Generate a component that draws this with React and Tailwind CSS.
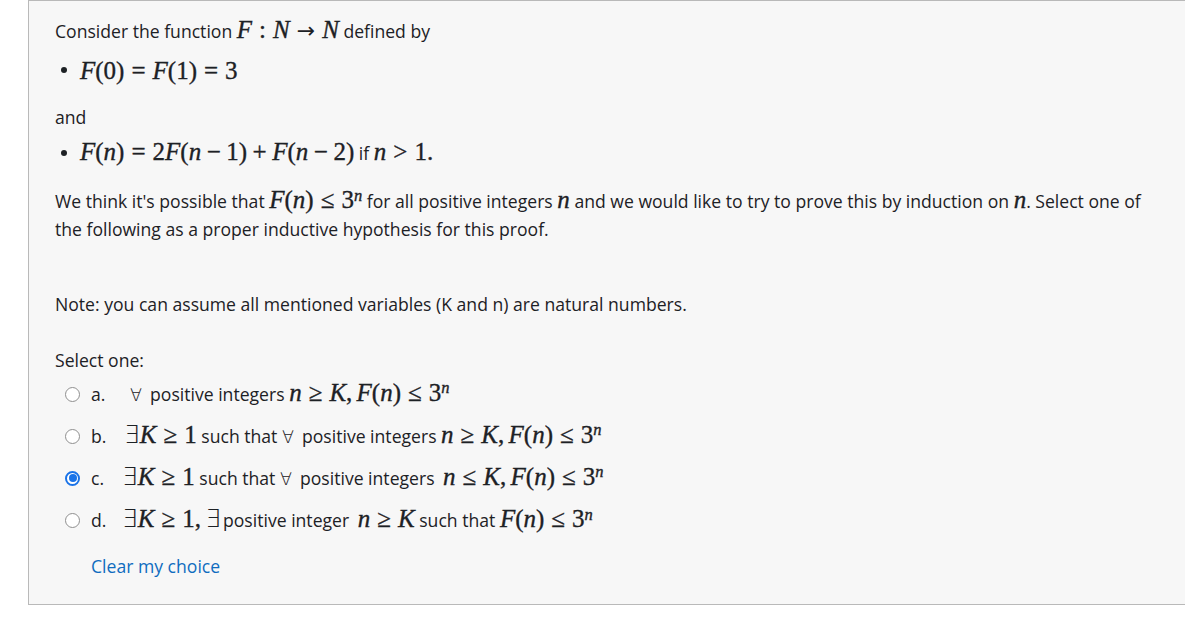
import React from "react";

const I = ({ children }) => <span className="italic">{children}</span>;
const Rel = ({ children }) => <span className="mx-[0.28em]">{children}</span>;
const Bin = ({ children }) => <span className="mx-[0.22em]">{children}</span>;
const Q = ({ children }) => (
  <span className="font-['DejaVu_Sans',sans-serif] font-extralight [-webkit-text-stroke:0px]">{children}</span>
);
const M = ({ children }) => (
  <span className="font-['Liberation_Serif','DejaVu_Serif',serif] text-[25px] leading-none whitespace-nowrap [-webkit-text-stroke:0.35px]">
    {children}
  </span>
);
const Pow = () => (
  <span>
    3<span className="relative -top-[0.45em] text-[0.66em] italic">n</span>
  </span>
);
const Fn = () => (
  <span>
    <I>F</I>(<I>n</I>)
  </span>
);

function Radio({ checked }) {
  return checked ? (
    <span className="w-[15px] h-[15px] rounded-full border-[2px] border-[#1a73e8] flex items-center justify-center bg-white">
      <span className="block w-[8px] h-[8px] rounded-full bg-[#1a73e8]" />
    </span>
  ) : (
    <span className="block w-[15px] h-[15px] rounded-full border border-[#8f8f8f] bg-white" />
  );
}

function Option({ letter, checked, children, gap = "" }) {
  return (
    <div className="h-[42px] flex items-center whitespace-nowrap">
      <span className="ml-[10px] shrink-0">
        <Radio checked={checked} />
      </span>
      <span className="ml-[11px] w-[31px] shrink-0">{letter}.</span>
      <span className={gap}>{children}</span>
    </div>
  );
}

export default function App() {
  return (
    <div className="w-[1185px] h-[622px] bg-white font-['Open_Sans','Noto_Sans',sans-serif] text-[#1d2125] text-[17.6px]">
      <div className="ml-[28px] h-[605px] border-l border-t border-b border-[#b9b9b9] bg-[#f7f7f7] pl-[26px] pt-[16px]">
        <div className="h-[28px] leading-[28px]">
          Consider the function{" "}
          <M>
            <I>F</I>
            <Rel>:</Rel>
            <I>N</I>
            <Rel>
              <span className="font-['DejaVu_Sans',sans-serif] text-[22px] [-webkit-text-stroke:0px]">→</span>
            </Rel>
            <I>N</I>
          </M>{" "}
          defined by
        </div>
        <div className="mt-[11px] h-[28px] flex items-center">
          <span className="block w-[6px] h-[6px] rounded-full bg-[#1d2125] ml-[6px] mr-[13px]" />
          <M>
            <I>F</I>(0)<Rel>=</Rel>
            <I>F</I>(1)<Rel>=</Rel>3
          </M>
        </div>
        <div className="mt-[19px] h-[28px] leading-[28px]">and</div>
        <div className="mt-[8px] h-[28px] flex items-center">
          <span className="block w-[6px] h-[6px] rounded-full bg-[#1d2125] ml-[6px] mr-[13px]" />
          <span>
            <M>
              <Fn />
              <Rel>=</Rel>2<I>F</I>(<I>n</I>
              <Bin>−</Bin>1)<Bin>+</Bin>
              <I>F</I>(<I>n</I>
              <Bin>−</Bin>2)
            </M>{" "}
            if{" "}
            <M>
              <I>n</I>
              <Rel>&gt;</Rel>1.
            </M>
          </span>
        </div>
        <div className="mt-[20px] leading-[28px] w-[1100px]">
          We think it's possible that{" "}
          <M>
            <Fn />
            <Rel>≤</Rel>
            <Pow />
          </M>{" "}
          for all positive integers{" "}
          <M>
            <I>n</I>
          </M>{" "}
          and we would like to try to prove this by induction on{" "}
          <M>
            <I>n</I>
          </M>
          . Select one of the following as a proper inductive hypothesis for this proof.
        </div>
        <div className="mt-[47px] h-[28px] leading-[28px]">
          Note: you can assume all mentioned variables (K and n) are natural numbers.
        </div>
        <div className="mt-[28px] h-[27px] leading-[28px]">Select one:</div>
        <Option letter="a" gap="ml-[8px]">
          <Q>∀</Q>
          <span className="ml-[8px]">positive integers</span>{" "}
          <M>
            <I>n</I>
            <Rel>≥</Rel>
            <I>K</I>,<span className="ml-[0.17em]" />
            <Fn />
            <Rel>≤</Rel>
            <Pow />
          </M>
        </Option>
        <Option letter="b" gap="ml-[2px]">
          <M>
            <Q>∃</Q>
            <I>K</I>
            <Rel>≥</Rel>1
          </M>{" "}
          such that <Q>∀</Q>
          <span className="ml-[8px]">positive integers</span>{" "}
          <M>
            <I>n</I>
            <Rel>≥</Rel>
            <I>K</I>,<span className="ml-[0.17em]" />
            <Fn />
            <Rel>≤</Rel>
            <Pow />
          </M>
        </Option>
        <Option letter="c" checked>
          <M>
            <Q>∃</Q>
            <I>K</I>
            <Rel>≥</Rel>1
          </M>{" "}
          such that <Q>∀</Q>
          <span className="ml-[8px]">positive integers</span>{" "}
          <M>
            <span className="ml-[4px]" />
            <I>n</I>
            <Rel>≤</Rel>
            <I>K</I>,<span className="ml-[0.17em]" />
            <Fn />
            <Rel>≤</Rel>
            <Pow />
          </M>
        </Option>
        <Option letter="d">
          <M>
            <Q>∃</Q>
            <I>K</I>
            <Rel>≥</Rel>1,<span className="ml-[0.17em]" />
            <Q>∃</Q>
          </M>
          <span className="ml-[2px]">positive integer</span>{" "}
          <M>
            <span className="ml-[4px]" />
            <I>n</I>
            <Rel>≥</Rel>
            <I>K</I>
          </M>{" "}
          such that{" "}
          <M>
            <Fn />
            <Rel>≤</Rel>
            <Pow />
          </M>
        </Option>
        <div className="mt-[11px] ml-[36px] h-[28px] leading-[28px] text-[#0f6cbf]">
          Clear my choice
        </div>
      </div>
    </div>
  );
}
